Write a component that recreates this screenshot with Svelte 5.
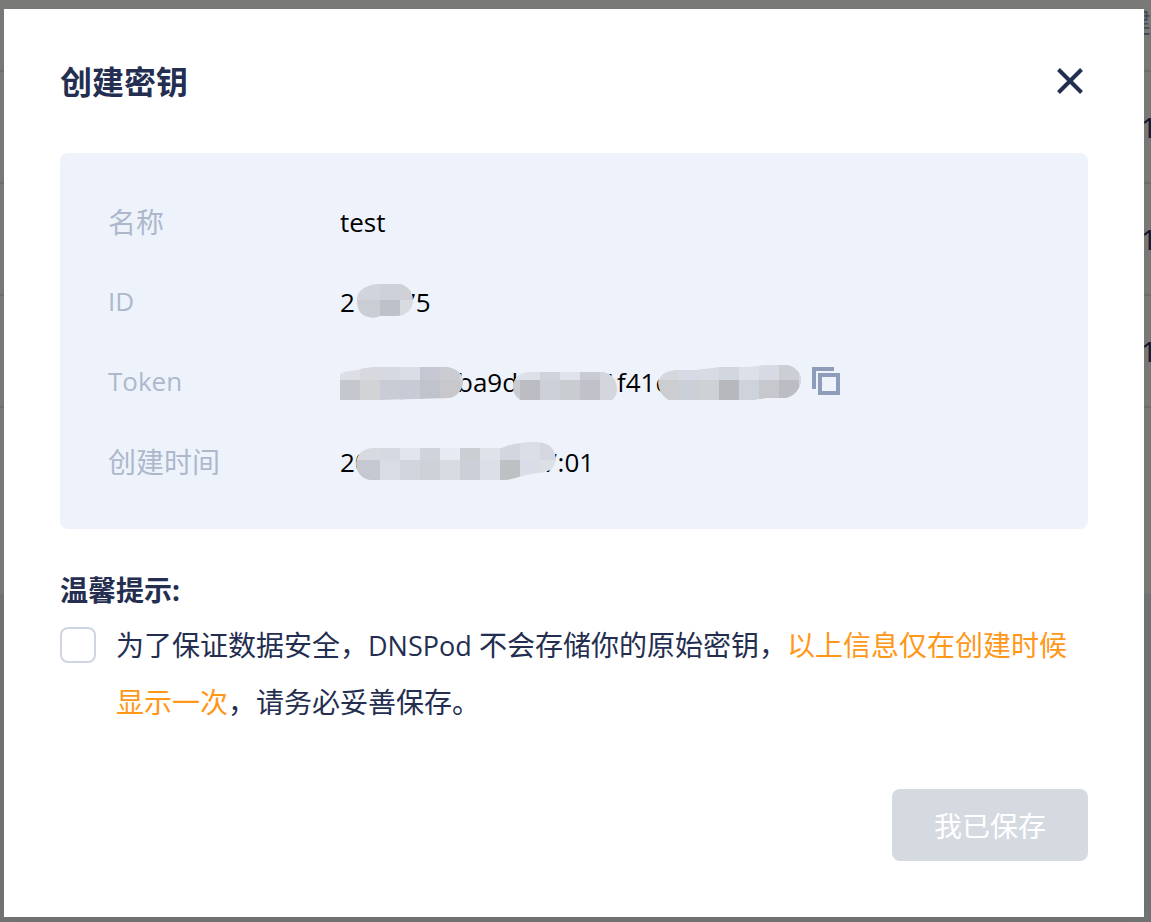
<script lang="ts">
	type Mask = {
		id: string;
		width: number;
		before: number;
		after: number;
		offset: number;
		shape: string;
		top: string[];
		bottom: string[];
	};
	type Field = { label: string; parts: (string | Mask)[]; copy?: boolean };

	// before/after: how far the mosaic slides over the text next to it.
	// offset: where the first 20px mosaic cell starts.
	const fields: Field[] = [
		{ label: '名称', parts: ['test'] },
		{
			label: 'ID',
			parts: [
				'2',
				{
					id: 'mask-id',
					width: 56,
					before: -2,
					after: 12,
					offset: 3,
					shape: 'M0 18C0 8 10 2 24 2H42C50 3 56 9 56 18C56 28 49 34 38 34H23C18 37 8 36 3 30Q0 26 0 18Z',
					top: ['#d1d4dc', '#cdd1da', '#cfd1d6'],
					bottom: ['#cacdd4', '#bfc1ca', '#d8dbe0']
				},
				'75'
			]
		},
		{
			label: 'Token',
			copy: true,
			parts: [
				{
					id: 'mask-token-a',
					width: 123,
					before: 0,
					after: 6,
					offset: 0,
					shape: 'M0 12Q4 9 18 8Q26 5 36 5H108C117 7 123 12 123 20C122 29 116 36 108 36L40 38H0Z',
					top: ['#dcdfe5', '#d8d9de', '#d5d9e2', '#dadde6', '#c5c8d2', '#cbccd2', '#d7dae0'],
					bottom: ['#c4c7cc', '#d2d3d5', '#c8cdd5', '#c7cbd5', '#c0c3cc', '#c8c8cc', '#c8cbd0']
				},
				'ba9d',
				{
					id: 'mask-token-b',
					width: 104,
					before: 5,
					after: 15,
					offset: -13,
					shape: 'M0 25C0 15 8 10 18 10H90C99 11 104 19 104 27C104 32 102 36 99 38H7Q0 33 0 25Z',
					top: ['#dce0e7', '#dce0e7', '#ced3dc', '#dfe3ec', '#c9cad3', '#d3d6dc'],
					bottom: ['#c8cbd2', '#bcbdc2', '#cbd0d9', '#c9ccd1', '#c1c1ca', '#d3d6dc']
				},
				'1f41c',
				{
					id: 'mask-token-c',
					width: 143,
					before: 10,
					after: 0,
					offset: 1,
					shape: 'M0 20Q3 9 18 8H38L62 5H90L108 3H130C138 5 143 11 143 18C142 27 137 34 128 36H108L96 38H10Q0 31 0 20Z',
					top: ['#d4d7dc', '#d5dae5', '#d8dbe4', '#d2d6df', '#dce0e9', '#d7dae3', '#cbced3', '#d4dbe7'],
					bottom: ['#cbcdd1', '#cacfd8', '#cfd2d5', '#b6b8bd', '#cdd2db', '#c7c8cd', '#bcbdc2', '#d4dbe7']
				}
			]
		},
		{
			label: '创建时间',
			parts: [
				'20',
				{
					id: 'mask-time',
					width: 200,
					before: 14,
					after: 13,
					offset: 4,
					shape: 'M0 21C1 12 7 7 16 6H146Q153 2 165 1C178-1 190 0 195 5C203 14 201 27 189 30L169 33Q157 37 150 38H14C5 37 0 29 0 21Z',
					top: ['#d7dae1', '#d4d9e2', '#e1e5ed', '#cfd3dc', '#e6eaf3', '#cbcfd3', '#dfe3e9', '#d2d6de', '#dadee7', '#d4d7df'],
					bottom: ['#c5c8d0', '#d8dce5', '#d2d5dd', '#cdd1d8', '#d8dce0', '#cbcfd8', '#dbdfe8', '#bcc1c4', '#d8dde8', '#dce0e4']
				},
				'7:01'
			]
		}
	];

	let saved = $state(false);
</script>

<div class="screen">
	<table class="records">
		<thead>
			<tr><th></th><th>建</th></tr>
		</thead>
		<tbody>
			{#each [1, 2, 3] as row (row)}
				<tr><td></td><td>1</td></tr>
			{/each}
		</tbody>
		<tfoot>
			<tr><td colspan="2"></td></tr>
		</tfoot>
	</table>

	<div class="backdrop">
		<div class="dialog" role="dialog" aria-modal="true" aria-labelledby="dialog-title">
			<header>
				<h1 id="dialog-title">创建密钥</h1>
				<button class="close" type="button" aria-label="关闭">
					<svg width="28" height="28" viewBox="0 0 28 28">
						<path d="M2.5 2.5l23 23M25.5 2.5l-23 23" stroke="currentColor" stroke-width="4" />
					</svg>
				</button>
			</header>

			<dl class="panel">
				{#each fields as field (field.label)}
					<div class="row">
						<dt class:latin={/^[A-Za-z]+$/.test(field.label)}>{field.label}</dt>
						<dd>
							{#each field.parts as part}
								{#if typeof part === 'string'}
									<span>{part}</span>
								{:else}
									<svg
										class="mask"
										width={part.width}
										height="40"
										style="margin-left: {-part.before}px; margin-right: {-part.after}px"
										aria-hidden="true"
									>
										<clipPath id={part.id}><path d={part.shape} /></clipPath>
										<g clip-path="url(#{part.id})" shape-rendering="crispEdges">
											{#each part.top as fill, i}
												{@const x = i === 0 ? 0 : part.offset + i * 20}
												<rect {x} y="0" width="24" height="18" {fill} />
												<rect {x} y="18" width="24" height="22" fill={part.bottom[i]} />
											{/each}
										</g>
									</svg>
								{/if}
							{/each}
							{#if field.copy}
								<button class="copy" type="button" aria-label="复制">
									<svg width="28" height="28" viewBox="0 0 28 28" fill="none" stroke="currentColor" stroke-width="4">
										<path d="M2 22V2h20" />
										<path d="M8 8h18v18H8z" />
									</svg>
								</button>
							{/if}
						</dd>
					</div>
				{/each}
			</dl>

			<h2>温馨提示:</h2>
			<div class="notice">
				<input id="saved" type="checkbox" bind:checked={saved} />
				<label for="saved">
					为了保证数据安全，<span class="brand">DNSPod</span> 不会存储你的原始密钥，<em>以上信息仅在创建时候显示一次</em>，请务必妥善保存。
				</label>
			</div>

			<footer>
				<button class="confirm" type="button" disabled={!saved}>我已保存</button>
			</footer>
		</div>
	</div>
</div>

<style>
	:global(body) {
		margin: 0;
		background: #e4e6ea;
	}
	.screen {
		display: grid;
		min-height: 100vh;
		overflow: hidden;
		font-family: 'Open Sans', 'Noto Sans CJK SC', sans-serif;
		font-size: 28px;
		color: #242e50;
	}
	.screen > * {
		grid-area: 1 / 1;
		min-width: 0;
	}

	.records {
		align-self: start;
		width: 100%;
		table-layout: fixed;
		border-collapse: separate;
		border-spacing: 0;
		background: #f4f4f0;
	}
	.records th,
	.records td {
		box-sizing: border-box;
		height: 112px;
		padding: 0;
		border-bottom: 2px solid #dcdcda;
		font-weight: 400;
		line-height: 108px;
		text-align: left;
	}
	.records th {
		height: 72px;
		line-height: 44px;
		vertical-align: top;
		color: #8c9bb5;
	}
	.records th:last-child {
		width: 28px;
	}
	.records tbody td:last-child {
		padding-left: 18px;
	}
	.records tfoot td {
		height: 186px;
		border: 0;
	}

	.backdrop {
		z-index: 1;
		display: flex;
		box-sizing: border-box;
		padding: 9px 7px 5px 4px;
		background: rgba(0, 0, 0, 0.5);
	}
	.dialog {
		flex: 1;
		display: flex;
		flex-direction: column;
		box-sizing: border-box;
		min-width: 0;
		padding: 48px 56px 56px;
		background: #fff;
		box-shadow: 0 0 40px rgba(0, 0, 0, 0.04);
	}

	header {
		display: flex;
		align-items: center;
		justify-content: space-between;
		height: 48px;
		margin-bottom: 48px;
	}
	h1 {
		margin: 0;
		padding-top: 2px;
		font-size: 32px;
		line-height: 48px;
	}
	button {
		padding: 0;
		border: 0;
		background: none;
		font: inherit;
		cursor: pointer;
	}
	button svg {
		display: block;
	}
	.close {
		padding: 4px;
		color: #242e50;
	}

	.panel {
		margin: 0;
		padding: 28px 48px;
		border-radius: 8px;
		background: #eef3fb;
	}
	.row {
		display: flex;
		align-items: center;
		height: 80px;
	}
	dt {
		flex: 0 0 232px;
		color: #adb8cc;
	}
	dd {
		display: flex;
		align-items: center;
		margin: 0;
		padding-top: 2px;
		font-size: 26px;
		color: #000;
		white-space: nowrap;
	}
	.latin {
		font-size: 26px;
	}
	.brand {
		font-size: 27px;
	}
	.mask {
		position: relative;
		flex: none;
	}
	.copy {
		margin: 0 0 2px 11px;
		color: #8d9dba;
	}

	h2 {
		margin: 38px 0 4px;
		font-size: 28px;
		line-height: 46px;
	}
	.notice {
		display: flex;
		align-items: flex-start;
		gap: 20px;
	}
	.notice input {
		flex: none;
		appearance: none;
		width: 36px;
		height: 36px;
		margin: 10px 0 0;
		border: 2px solid #cfd5e3;
		border-radius: 8px;
		background: #fff;
	}
	.notice input:checked {
		background: #cfd5e3;
	}
	.notice label {
		line-height: 56px;
	}
	em {
		font-style: normal;
		color: #ff9719;
	}

	footer {
		display: flex;
		justify-content: flex-end;
		margin-top: auto;
	}
	.confirm {
		width: 196px;
		height: 72px;
		border-radius: 8px;
		background: #006eff;
		color: #fff;
	}
	.confirm:disabled {
		background: #d5dae1;
		cursor: not-allowed;
	}
</style>
